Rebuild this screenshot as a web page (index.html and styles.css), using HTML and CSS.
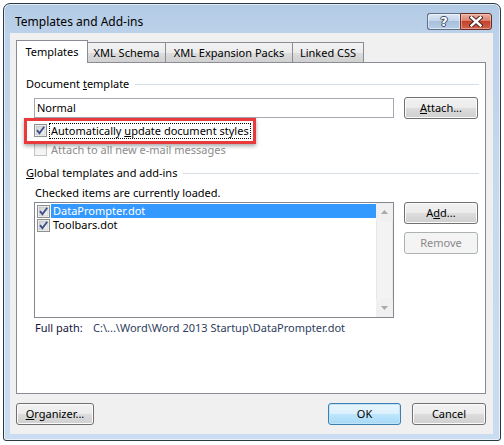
FILE: index.html
```html
<!DOCTYPE html>
<html>
<head>
<meta charset="utf-8">
<title>Templates and Add-ins</title>
<link rel="stylesheet" href="styles.css">
</head>
<body>
<div class="window">
  <div class="titlebar">
    <span class="title">Templates and Add-ins</span>
    <div class="caption-btns">
      <div class="cbtn help"><span class="qmark">?</span></div>
      <div class="cbtn close">
        <svg width="14" height="11" viewBox="0 0 14 11">
          <path d="M2.5 1.5 L11.5 9.5 M11.5 1.5 L2.5 9.5" stroke="#4a2420" stroke-width="4.4" stroke-linecap="square" fill="none"/>
          <path d="M2.5 1.5 L11.5 9.5 M11.5 1.5 L2.5 9.5" stroke="#ffffff" stroke-width="2.4" stroke-linecap="square" fill="none"/>
        </svg>
      </div>
    </div>
  </div>
  <div class="client">
    <div class="tabs">
      <div class="tab active t1">Templates</div>
      <div class="tab t2">XML Schema</div>
      <div class="tab t3">XML Expansion Packs</div>
      <div class="tab t4">Linked CSS</div>
    </div>
    <div class="panel">
      <div class="group g1"><span>Document <u>t</u>emplate</span><span class="line"></span></div>
      <div class="row-template">
        <div class="textbox">Normal</div>
        <div class="btn attach"><u>A</u>ttach...</div>
      </div>
      <div class="check-row first">
        <svg class="cb" width="13" height="13" viewBox="0 0 13 13">
          <defs><linearGradient id="cbg" x1="0" y1="0" x2="1" y2="1"><stop offset="0" stop-color="#cfcfcf"/><stop offset="1" stop-color="#f8f8f8"/></linearGradient></defs>
          <rect x="0.5" y="0.5" width="12" height="12" fill="#fff" stroke="#8e8f8f"/>
          <rect x="2" y="2" width="9" height="9" fill="url(#cbg)" stroke="#b5b5b5" stroke-width="0.6"/>
          <path d="M3 6.2 L5.4 9.2 L10.2 2.8" stroke="#3c4f8a" stroke-width="1.9" fill="none"/>
        </svg>
        <span class="focus">Automatically <u>u</u>pdate document styles</span>
      </div>
      <div class="check-row disabled">
        <svg class="cb" width="13" height="13" viewBox="0 0 13 13">
          <rect x="0.5" y="0.5" width="12" height="12" fill="#f4f4f4" stroke="#c4c4c4"/>
        </svg>
        <span class="lbl">Attach to all new e-mail messages</span>
      </div>
      <div class="group g2"><span><u>G</u>lobal templates and add-ins</span><span class="line"></span></div>
      <div class="note">Checked items are currently loaded.</div>
      <div class="row-list">
        <div class="listbox">
          <div class="items">
            <div class="item sel">
              <svg class="cb" width="13" height="13" viewBox="0 0 13 13">
                <rect x="0.5" y="0.5" width="12" height="12" fill="#fff" stroke="#8e8f8f"/>
                <rect x="2" y="2" width="9" height="9" fill="url(#cbg)" stroke="#b5b5b5" stroke-width="0.6"/>
                <path d="M3 6.2 L5.4 9.2 L10.2 2.8" stroke="#3c4f8a" stroke-width="1.9" fill="none"/>
              </svg>
              <span class="itext">DataPrompter.dot</span>
            </div>
            <div class="item">
              <svg class="cb" width="13" height="13" viewBox="0 0 13 13">
                <rect x="0.5" y="0.5" width="12" height="12" fill="#fff" stroke="#8e8f8f"/>
                <rect x="2" y="2" width="9" height="9" fill="url(#cbg)" stroke="#b5b5b5" stroke-width="0.6"/>
                <path d="M3 6.2 L5.4 9.2 L10.2 2.8" stroke="#3c4f8a" stroke-width="1.9" fill="none"/>
              </svg>
              <span class="itext">Toolbars.dot</span>
            </div>
          </div>
          <div class="scrollbar">
            <svg class="arrow" width="7" height="4" viewBox="0 0 7 4"><path d="M0 4 L3.5 0 L7 4 Z" fill="#a9a9a9"/></svg>
            <div class="track"></div>
            <svg class="arrow" width="7" height="4" viewBox="0 0 7 4"><path d="M0 0 L3.5 4 L7 0 Z" fill="#a9a9a9"/></svg>
          </div>
        </div>
        <div class="side-btns">
          <div class="btn">A<u>d</u>d...</div>
          <div class="btn off">Remove</div>
        </div>
      </div>
      <div class="fullpath"><span class="fp-label">Full path:</span><span class="fp-value">C:\...\Word\Word 2013 Startup\DataPrompter.dot</span></div>
      <div class="highlight"></div>
    </div>
    <div class="footer">
      <div class="btn organizer"><u>O</u>rganizer...</div>
      <div class="btn ok">OK</div>
      <div class="btn cancel">Cancel</div>
    </div>
  </div>
</div>
</body>
</html>
```
FILE: styles.css
```css
* { box-sizing: border-box; }
html, body { margin: 0; padding: 0; background: #ffffff; }
body {
  font-family: "Noto Sans", "Open Sans", "DejaVu Sans", sans-serif;
  font-size: 11px;
  color: #000;
}
u { text-decoration: underline; text-underline-offset: 1px; }

.window {
  margin: 3px 0 0 3px;
  width: 498px;
  height: 438px;
  border: 1px solid #2f3944;
  border-radius: 7px 7px 3px 3px;
  background: linear-gradient(#b3cae5 0, #bcd2ea 30px, #c6d9ef 200px, #cadcf1 100%);
  box-shadow: inset 0 0 0 1px rgba(255,255,255,0.6);
  padding: 0 7px 6px 6px;
  display: flex;
  flex-direction: column;
}
.titlebar { height: 29px; display: flex; align-items: flex-start; flex: none; }
.title { padding-left: 5px; margin-top: 11px; line-height: 14px; font-size: 12px; color: #000; }
.caption-btns { margin-left: auto; margin-top: 9px; margin-right: 1px; display: flex; }
.cbtn {
  height: 17px;
  border: 1px solid #5e6f88;
  display: flex; align-items: center; justify-content: center;
}
.cbtn.help {
  width: 33px;
  border-radius: 3px 0 0 3px;
  border-right: none;
  background: linear-gradient(#dde8f5 0, #c4d5ea 45%, #a9c0dc 50%, #b7cde6 100%);
  box-shadow: inset 0 0 0 1px rgba(255,255,255,0.5);
}
.qmark {
  font-family: "DejaVu Sans", sans-serif;
  font-weight: bold;
  font-size: 13px;
  line-height: 13px;
  color: #fff;
  text-shadow: 1px 0 0 #3d4c60, -1px 0 0 #3d4c60, 0 1px 0 #3d4c60, 0 -1px 0 #3d4c60;
}
.cbtn.close {
  width: 32px;
  border-color: #6a2b22;
  border-radius: 0 3px 3px 0;
  background: linear-gradient(#eab0a3 0, #d9826f 45%, #c4422c 50%, #d0634d 100%);
  box-shadow: inset 0 0 0 1px rgba(255,220,210,0.45);
}

.client {
  flex: 1;
  background: #f0f0f0;
  padding: 7px 7px 8px 6px;
  display: flex;
  flex-direction: column;
}
.tabs { display: flex; align-items: flex-end; height: 22px; flex: none; }
.tab {
  height: 20px;
  border: 1px solid #898c95;
  border-bottom: none;
  margin-right: -1px;
  background: linear-gradient(#f3f3f3, #ebebeb 50%, #dddddd 51%, #d0d0d0);
  padding-top: 3px;
  line-height: 14px;
  text-align: center;
}
.tab.active {
  height: 23px;
  margin-bottom: -1px;
  background: #fff;
  position: relative;
  z-index: 1;
  padding-top: 4px;
}
.t1 { width: 72px; }
.t2 { width: 79px; }
.t3 { width: 128px; }
.t4 { width: 72px; }

.panel {
  height: 332px;
  flex: none;
  background: #fff;
  border: 1px solid #898c95;
  padding: 0 7px 0 9px;
  position: relative;
}
.group { display: flex; align-items: center; height: 14px; line-height: 14px; }
.group .line { flex: 1; height: 1px; background: #d5dfe5; margin-left: 6px; margin-right: -1px; }
.g1 { margin-top: 14px; }
.g2 { margin-top: 7px; }

.row-template { display: flex; align-items: flex-start; height: 22px; margin-top: 6px; margin-left: 8px; }
.textbox {
  width: 360px; height: 20px; margin-top: 1px;
  border: 1px solid #a5a8ae;
  padding-left: 2px;
  line-height: 18px;
}
.btn {
  width: 74px; height: 22px;
  border: 1px solid #707070;
  border-radius: 3px;
  background: linear-gradient(#f2f2f2, #ebebeb 50%, #dddddd 51%, #cfcfcf);
  box-shadow: inset 0 0 0 1px #fbfbfb;
  text-align: center;
  line-height: 20px;
}
.attach { margin-left: auto; }
.btn.off {
  border-color: #adb2b5;
  background: #f4f4f4;
  box-shadow: none;
  color: #8a8a8a;
}

.check-row { display: flex; align-items: center; height: 19px; margin-left: 8px; }
.check-row.first { margin-top: 2px; }
.cb { flex: none; display: block; }
.focus { margin-left: 2px; border: 1px dotted #000; padding: 0 1px; line-height: 14px; }
.check-row.disabled .lbl { margin-left: 4px; color: #8d8d8d; line-height: 14px; }

.note { margin-top: 6px; margin-left: 9px; line-height: 14px; }

.row-list { display: flex; align-items: flex-start; margin-top: 2px; margin-left: 8px; }
.listbox {
  width: 360px; height: 116px;
  border: 1px solid #828790;
  display: flex;
}
.items { flex: 1; padding-top: 1px; }
.item { display: flex; align-items: center; height: 14px; padding-left: 2px; }
.item .itext { margin-left: 1px; padding-left: 2px; line-height: 14px; flex: 1; height: 14px; }
.item.sel .itext { background: #3399ff; color: #fff; }
.scrollbar {
  width: 17px;
  flex: none;
  display: flex; flex-direction: column; align-items: center;
  background: #f0f0f0;
}
.scrollbar .arrow { margin: 7px 0; flex: none; }
.scrollbar .track {
  flex: 1; width: 17px;
  border-left: 1px solid #e6e6e6;
  border-right: 1px solid #e6e6e6;
  background: #f3f3f3;
}
.side-btns { margin-left: auto; display: flex; flex-direction: column; gap: 8px; }

.fullpath { margin-top: 3px; margin-left: 9px; line-height: 14px; }
.fp-label { display: inline-block; width: 58px; color: #14143c; }
.fp-value { color: #2e3d5e; }

.highlight {
  position: absolute;
  left: 7px; top: 55px;
  width: 232px; height: 26px;
  border: 3px solid #e8393c;
  box-shadow: 0 2px 4px rgba(0,0,0,0.35);
  pointer-events: none;
}

.footer { display: flex; margin-top: 9px; flex: none; }
.organizer { width: 78px; }
.ok {
  margin-left: auto; width: 73px;
  border-color: #3c7fb1;
  box-shadow: inset 0 0 0 1px #bfe3f8;
  background: linear-gradient(#eaf6fd, #d9f0fc 50%, #bee6fd 51%, #a7d9f5);
}
.cancel { margin-left: 11px; width: 74px; }
```
